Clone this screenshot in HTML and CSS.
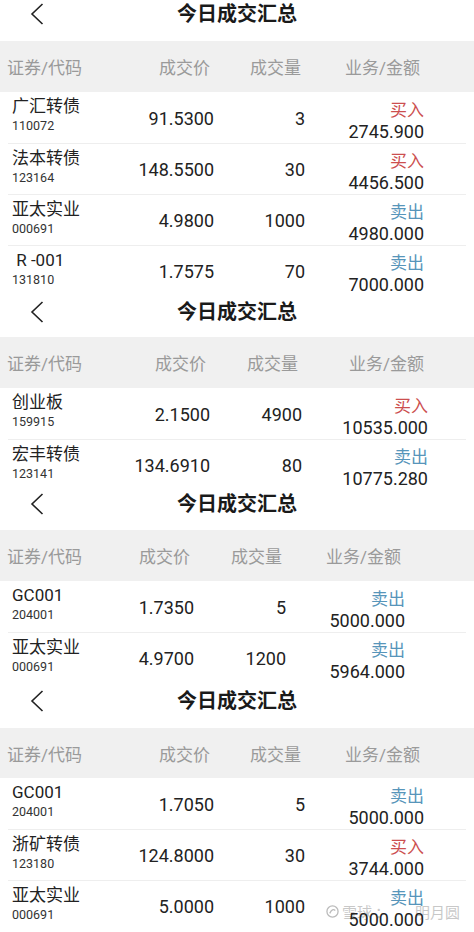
FILE: index.html
```html
<!DOCTYPE html>
<html lang="zh-CN">
<head>
  <meta charset="UTF-8">
  <meta name="viewport" content="width=device-width, initial-scale=1.0">
  <title>今日成交汇总</title>
  <link rel="stylesheet" href="styles.css">
</head>
<body>
  <div class="panel panel-a">
    <div class="navbar">
      <span class="back"><svg width="14" height="22" viewBox="0 0 14 22"><path d="M12.5 1 L2 11 L12.5 21" fill="none" stroke="#222" stroke-width="1.6"/></svg></span>
      <h1>今日成交汇总</h1>
      <span></span>
    </div>
    <div class="head">
      <div class="grid">
        <span class="c1">证券/代码</span><span>成交价</span><span>成交量</span><span>业务/金额</span>
      </div>
    </div>
    <div class="row grid">
      <div class="c1"><div class="name">广汇转债</div><div class="code">110072</div></div>
      <div class="num">91.5300</div><div class="num">3</div>
      <div class="deal"><div class="buy">买入</div><div class="amt">2745.900</div></div>
    </div>
    <div class="row grid">
      <div class="c1"><div class="name">法本转债</div><div class="code">123164</div></div>
      <div class="num">148.5500</div><div class="num">30</div>
      <div class="deal"><div class="buy">买入</div><div class="amt">4456.500</div></div>
    </div>
    <div class="row grid">
      <div class="c1"><div class="name">亚太实业</div><div class="code">000691</div></div>
      <div class="num">4.9800</div><div class="num">1000</div>
      <div class="deal"><div class="sell">卖出</div><div class="amt">4980.000</div></div>
    </div>
    <div class="row grid">
      <div class="c1"><div class="name">&nbsp;R -001</div><div class="code">131810</div></div>
      <div class="num">1.7575</div><div class="num">70</div>
      <div class="deal"><div class="sell">卖出</div><div class="amt">7000.000</div></div>
    </div>
  </div>

  <div class="panel panel-b">
    <div class="navbar">
      <span class="back"><svg width="14" height="22" viewBox="0 0 14 22"><path d="M12.5 1 L2 11 L12.5 21" fill="none" stroke="#222" stroke-width="1.6"/></svg></span>
      <h1>今日成交汇总</h1>
      <span></span>
    </div>
    <div class="head">
      <div class="grid">
        <span class="c1">证券/代码</span><span>成交价</span><span>成交量</span><span>业务/金额</span>
      </div>
    </div>
    <div class="row grid">
      <div class="c1"><div class="name">创业板</div><div class="code">159915</div></div>
      <div class="num">2.1500</div><div class="num">4900</div>
      <div class="deal"><div class="buy">买入</div><div class="amt">10535.000</div></div>
    </div>
    <div class="row grid">
      <div class="c1"><div class="name">宏丰转债</div><div class="code">123141</div></div>
      <div class="num">134.6910</div><div class="num">80</div>
      <div class="deal"><div class="sell">卖出</div><div class="amt">10775.280</div></div>
    </div>
  </div>

  <div class="panel panel-c">
    <div class="navbar">
      <span class="back"><svg width="14" height="22" viewBox="0 0 14 22"><path d="M12.5 1 L2 11 L12.5 21" fill="none" stroke="#222" stroke-width="1.6"/></svg></span>
      <h1>今日成交汇总</h1>
      <span></span>
    </div>
    <div class="head">
      <div class="grid">
        <span class="c1">证券/代码</span><span>成交价</span><span>成交量</span><span>业务/金额</span>
      </div>
    </div>
    <div class="row grid">
      <div class="c1"><div class="name">GC001</div><div class="code">204001</div></div>
      <div class="num">1.7350</div><div class="num">5</div>
      <div class="deal"><div class="sell">卖出</div><div class="amt">5000.000</div></div>
    </div>
    <div class="row grid">
      <div class="c1"><div class="name">亚太实业</div><div class="code">000691</div></div>
      <div class="num">4.9700</div><div class="num">1200</div>
      <div class="deal"><div class="sell">卖出</div><div class="amt">5964.000</div></div>
    </div>
  </div>

  <div class="panel panel-d">
    <div class="navbar">
      <span class="back"><svg width="14" height="22" viewBox="0 0 14 22"><path d="M12.5 1 L2 11 L12.5 21" fill="none" stroke="#222" stroke-width="1.6"/></svg></span>
      <h1>今日成交汇总</h1>
      <span></span>
    </div>
    <div class="head">
      <div class="grid">
        <span class="c1">证券/代码</span><span>成交价</span><span>成交量</span><span>业务/金额</span>
      </div>
    </div>
    <div class="row grid">
      <div class="c1"><div class="name">GC001</div><div class="code">204001</div></div>
      <div class="num">1.7050</div><div class="num">5</div>
      <div class="deal"><div class="sell">卖出</div><div class="amt">5000.000</div></div>
    </div>
    <div class="row grid">
      <div class="c1"><div class="name">浙矿转债</div><div class="code">123180</div></div>
      <div class="num">124.8000</div><div class="num">30</div>
      <div class="deal"><div class="buy">买入</div><div class="amt">3744.000</div></div>
    </div>
    <div class="row grid">
      <div class="c1"><div class="name">亚太实业</div><div class="code">000691</div></div>
      <div class="num">5.0000</div><div class="num">1000</div>
      <div class="deal"><div class="sell">卖出</div><div class="amt">5000.000</div></div>
    </div>
    <div class="watermark">
      <svg width="13" height="13" viewBox="0 0 14 14"><circle cx="7" cy="7" r="6" fill="none" stroke="#bbb" stroke-width="1.4"/><path d="M4 9 Q7 3 10 6" fill="none" stroke="#bbb" stroke-width="1.4"/></svg>
      <span>雪球</span><span class="dim">：</span><span>明月圆</span>
    </div>
  </div>
</body>
</html>
```

FILE: styles.css
```css
body {
  margin: 0;
  width: 474px;
  font-family: Roboto, "Noto Sans CJK SC", sans-serif;
  color: #222;
  background: #fff;
}
.panel {
  --c1: 122px;
  --c2: 84px;
  --c3: 91px;
  --c4: 119px;
  position: relative;
}
.panel-b {
  --c2: 80px;
  --c3: 92px;
  --c4: 126px;
}
.panel-c {
  --c1: 112px;
  --c2: 74px;
  --c3: 92px;
  --c4: 119px;
}
.navbar {
  display: grid;
  grid-template-columns: 1fr auto 1fr;
  align-items: start;
  height: 41px;
  box-sizing: border-box;
}
.panel-b .navbar {
  padding-top: 2px;
}
.panel-c .navbar {
  height: 40px;
}
.panel-d .navbar {
  height: 45px;
  padding-top: 4px;
}
.navbar h1 {
  margin: 0;
  font-size: 20px;
  line-height: 28px;
  font-weight: bold;
  color: #1a1a1a;
}
.back {
  padding-left: 30px;
  height: 28px;
  display: flex;
  align-items: center;
}
.grid {
  display: grid;
  grid-template-columns: var(--c1) var(--c2) var(--c3) var(--c4);
  margin: 0 8px;
}
.head {
  background: #f0f0f0;
  height: 51px;
  display: flex;
  align-items: center;
  font-size: 17px;
  color: #9a9a9a;
}
.panel-d .head {
  height: 50px;
}
.head span {
  text-align: right;
  padding-right: 4px;
}
.head .c1 {
  text-align: left;
  margin-left: -1px;
}
.row {
  position: relative;
  z-index: 1;
  height: 51px;
  box-sizing: border-box;
  font-size: 17px;
}
.row + .row {
  border-top: 1px solid #eeeeee;
}
.row .c1 {
  padding-left: 4px;
  padding-top: 4px;
}
.name {
  line-height: 21px;
}
.code {
  font-size: 12.5px;
  line-height: 17px;
  color: #333;
}
.num {
  font-size: 18px;
  text-align: right;
  align-self: center;
  padding-top: 1px;
}
.deal {
  text-align: right;
  align-self: end;
  line-height: 22px;
}
.amt {
  font-size: 18px;
}
.buy {
  color: #cc4f4f;
}
.sell {
  color: #5795ba;
}
.watermark {
  position: absolute;
  right: 14px;
  bottom: 9px;
  display: flex;
  align-items: center;
  gap: 3px;
  font-size: 15px;
  color: rgba(175, 175, 175, 0.7);
}
.watermark .dim {
  margin-right: 22px;
}
```
